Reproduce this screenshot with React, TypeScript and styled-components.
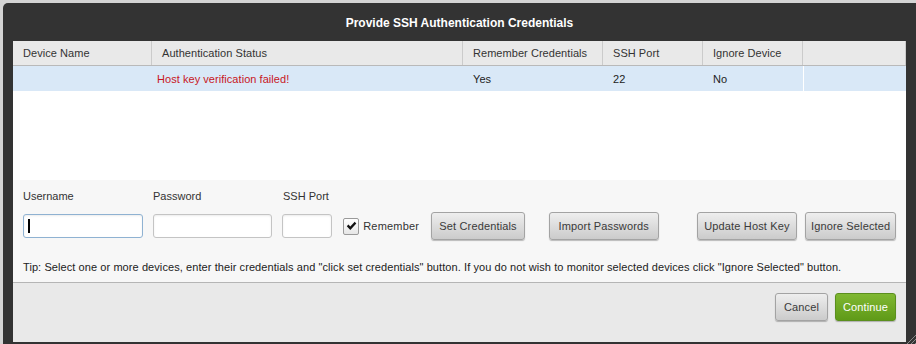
import React from "react";
import styled, { createGlobalStyle } from "styled-components";

const Global = createGlobalStyle`
  html, body { margin: 0; padding: 0; }
  body {
    background: #d4d4d4;
    font-family: "Liberation Sans", Arial, sans-serif;
    font-size: 11px;
    color: #333;
    overflow: hidden;
  }
`;

const Page = styled.div`
  width: 916px;
  height: 344px;
  padding: 3px 0 0 3px;
  box-sizing: border-box;
  overflow: hidden;
`;

const Dialog = styled.div`
  position: relative;
  width: 920px;
  height: 346px;
  box-sizing: border-box;
  background: #333333;
  border-radius: 5px 0 0 5px;
  padding: 0 0 0 10px;
  display: flex;
  flex-direction: column;
`;

const TitleBar = styled.div`
  height: 38px;
  width: 893px;
  display: flex;
  align-items: center;
  justify-content: center;
  color: #fff;
  font-weight: bold;
  font-size: 12px;
  padding-top: 1px;
  box-sizing: border-box;
`;

const Content = styled.div`
  width: 893px;
  height: 291px;
  background: #fff;
  display: flex;
  flex-direction: column;
`;

const Table = styled.div`
  display: flex;
  flex-direction: column;
  height: 139px;
  flex-shrink: 0;
`;

const HeaderRow = styled.div`
  display: flex;
  height: 24px;
  background: #e9e9e9;
  border-bottom: 1px solid #b9b9b9;
`;

const HeadCell = styled.div<{ $w?: number }>`
  ${(p) => (p.$w ? `width: ${p.$w}px;` : "flex: 1;")}
  box-sizing: border-box;
  padding-left: 10px;
  display: flex;
  align-items: center;
  border-right: 1px solid #cbcbcb;
  color: #333;
  letter-spacing: 0.05px;
`;

const DataRow = styled.div`
  display: flex;
  height: 25px;
  background: #d9e8f7;
`;

const Cell = styled.div<{ $w?: number; $pad?: number; $red?: boolean; $sep?: boolean }>`
  ${(p) => (p.$w ? `width: ${p.$w}px;` : "flex: 1;")}
  box-sizing: border-box;
  padding-left: ${(p) => p.$pad ?? 10}px;
  display: flex;
  align-items: center;
  color: ${(p) => (p.$red ? "#c8161d" : "#222")};
  letter-spacing: 0.05px;
  ${(p) => (p.$sep ? "border-left: 1px solid #fff;" : "")}
`;

const Form = styled.div`
  background: #f7f7f7;
  padding: 9px 10px 8px 10px;
  display: flex;
  flex-direction: column;
  height: 102px;
  flex-shrink: 0;
  box-sizing: border-box;
`;

const LabelRow = styled.div`
  display: flex;
  height: 14px;
  align-items: center;
  margin-bottom: 9px;
`;

const FieldLabel = styled.div<{ $w: number }>`
  width: ${(p) => p.$w}px;
  color: #333;
`;

const ControlRow = styled.div`
  display: flex;
  align-items: center;
  height: 28px;
`;

const FieldBox = styled.div<{ $w: number; $focus?: boolean; $mr?: number }>`
  width: ${(p) => p.$w}px;
  height: 24px;
  box-sizing: border-box;
  margin-right: ${(p) => p.$mr ?? 10}px;
  background: #fff;
  border: 1px solid ${(p) => (p.$focus ? "#8fb2d2" : "#c4c4c4")};
  border-radius: 3px;
  box-shadow: inset 0 1px 2px rgba(0, 0, 0, 0.08);
  display: flex;
  align-items: center;
  padding-left: 4px;
`;

const Caret = styled.span`
  width: 2px;
  height: 14px;
  background: #000;
`;

const CheckLabel = styled.label`
  display: flex;
  align-items: center;
  gap: 4px;
  font-size: 11px;
  letter-spacing: 0.2px;
  color: #333;
  margin-left: 1px;
  margin-right: 12px;
`;

const CheckBox = styled.span`
  width: 16px;
  height: 17px;
  box-sizing: border-box;
  border: 1px solid #9a9a9a;
  border-radius: 2px;
  background: linear-gradient(#ffffff, #e6e6e6);
  display: flex;
  align-items: center;
  justify-content: center;
`;

const Button = styled.button<{ $w: number; $mr?: number; $h?: number; $primary?: boolean }>`
  width: ${(p) => p.$w}px;
  height: ${(p) => p.$h ?? 28}px;
  margin-right: ${(p) => p.$mr ?? 0}px;
  padding: 0;
  box-sizing: border-box;
  font-family: "Liberation Sans", Arial, sans-serif;
  font-size: 11px;
  letter-spacing: 0.15px;
  border-radius: 3px;
  cursor: pointer;
  color: ${(p) => (p.$primary ? "#fff" : "#3a3a3a")};
  border: 1px solid ${(p) => (p.$primary ? "#5b8f1e" : "#a3a3a3")};
  background: ${(p) =>
    p.$primary
      ? "linear-gradient(#80b832, #5f9a18)"
      : "linear-gradient(#eeeeee, #cbcbcb)"};
  box-shadow: 0 1px 1px rgba(0, 0, 0, 0.25);
`;

const Tip = styled.div`
  margin-top: 21px;
  line-height: 13px;
  color: #222;
  letter-spacing: 0.08px;
  white-space: nowrap;
`;

const Footer = styled.div`
  height: 49px;
  flex-shrink: 0;
  border-top: 1px solid #b5b5b5;
  background: #e9e9e9;
  display: flex;
  justify-content: flex-end;
  align-items: flex-start;
  padding: 10px 10px 0 0;
  gap: 7px;
`;

const Grip = styled.svg`
  position: absolute;
  left: 901px;
  top: 328px;
`;

export default function App() {
  return (
    <>
      <Global />
      <Page>
        <Dialog>
          <TitleBar>Provide SSH Authentication Credentials</TitleBar>
          <Content>
            <Table>
              <HeaderRow>
                <HeadCell $w={139}>Device Name</HeadCell>
                <HeadCell $w={311}>Authentication Status</HeadCell>
                <HeadCell $w={140}>Remember Credentials</HeadCell>
                <HeadCell $w={100}>SSH Port</HeadCell>
                <HeadCell $w={100}>Ignore Device</HeadCell>
                <HeadCell />
              </HeaderRow>
              <DataRow>
                <Cell $w={139}></Cell>
                <Cell $w={311} $pad={5} $red>
                  Host key verification failed!
                </Cell>
                <Cell $w={140}>Yes</Cell>
                <Cell $w={100}>22</Cell>
                <Cell $w={100}>No</Cell>
                <Cell $sep />
              </DataRow>
            </Table>
            <Form>
              <LabelRow>
                <FieldLabel $w={130}>Username</FieldLabel>
                <FieldLabel $w={130}>Password</FieldLabel>
                <FieldLabel $w={60}>SSH Port</FieldLabel>
              </LabelRow>
              <ControlRow>
                <FieldBox $w={120} $focus>
                  <Caret />
                </FieldBox>
                <FieldBox $w={120} />
                <FieldBox $w={50} />
                <CheckLabel>
                  <CheckBox>
                    <svg width="11" height="10" viewBox="0 0 11 10">
                      <path d="M0.8 5.2 L2.4 3.6 L4.3 5.6 L8.7 0.8 L10.3 2.4 L4.3 8.9 Z" fill="#111" />
                    </svg>
                  </CheckBox>
                  Remember
                </CheckLabel>
                <Button $w={94} $mr={24}>Set Credentials</Button>
                <Button $w={110} $mr={38}>Import Passwords</Button>
                <Button $w={101} $mr={8}>Update Host Key</Button>
                <Button $w={91}>Ignore Selected</Button>
              </ControlRow>
              <Tip>
                Tip: Select one or more devices, enter their credentials and "click set credentials" button. If you do not wish to monitor selected devices click "Ignore Selected" button.
              </Tip>
            </Form>
            <Footer>
              <Button $w={53} $h={28}>Cancel</Button>
              <Button $w={61} $h={28} $primary>Continue</Button>
            </Footer>
          </Content>
          <Grip width="14" height="14" viewBox="0 0 14 14">
            <path d="M13 3 L3 13 M13 7 L7 13 M13 11 L11 13" stroke="#8a8a8a" strokeWidth="1" />
          </Grip>
        </Dialog>
      </Page>
    </>
  );
}
